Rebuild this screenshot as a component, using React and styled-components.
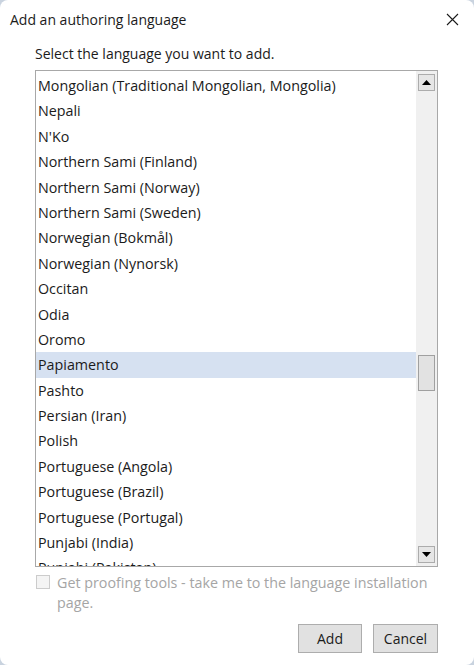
import React from 'react';
import styled, { createGlobalStyle } from 'styled-components';

const GlobalStyle = createGlobalStyle`
  html, body {
    margin: 0;
    padding: 0;
    background: #c9d3df;
  }
  body {
    font-family: 'Segoe UI', 'Open Sans', sans-serif;
  }
`;

const Dialog = styled.div`
  width: 474px;
  height: 665px;
  box-sizing: border-box;
  background: #ffffff;
  border-radius: 8px;
  display: flex;
  flex-direction: column;
  overflow: hidden;
`;

const TitleBar = styled.div`
  height: 38px;
  display: flex;
  align-items: center;
  justify-content: space-between;
  padding: 0 14px 0 10px;
`;

const Title = styled.span`
  font-size: 14px;
  color: #1b1b1b;
`;

const CloseButton = styled.button`
  border: none;
  background: none;
  padding: 0;
  width: 16px;
  height: 16px;
  display: flex;
  align-items: center;
  justify-content: center;
`;

const Body = styled.div`
  display: flex;
  flex-direction: column;
  padding: 0 36px 0 35px;
`;

const Prompt = styled.div`
  font-size: 14px;
  color: #1b1b1b;
  height: 32px;
  line-height: 32px;
`;

const ListBox = styled.div`
  height: 497px;
  box-sizing: border-box;
  border: 1px solid #a8a8a8;
  display: flex;
  background: #fff;
`;

const Items = styled.div`
  flex: 1;
  overflow: hidden;
  padding-top: 2px;
`;

const Item = styled.div`
  height: 25.4px;
  line-height: 25.4px;
  padding-left: 2px;
  font-size: 14.3px;
  color: #1b1b1b;
  white-space: nowrap;
  background: ${(p) => (p.$selected ? '#d6e1f1' : 'transparent')};
`;

const ScrollBar = styled.div`
  width: 21px;
  background: #f0f0f0;
  display: flex;
  flex-direction: column;
  align-items: center;
  padding: 3px 0;
  box-sizing: border-box;
`;

const Arrow = styled.div`
  width: 17px;
  height: 17px;
  box-sizing: border-box;
  border: 1px solid #acacac;
  background: #e6e6e6;
  display: flex;
  align-items: center;
  justify-content: center;
`;

const Track = styled.div`
  flex: 1;
  width: 100%;
  display: flex;
  flex-direction: column;
  align-items: center;
`;

const Thumb = styled.div`
  width: 17px;
  height: 36px;
  box-sizing: border-box;
  border: 1px solid #a0a0a0;
  background: #e2e2e2;
`;

const CheckRow = styled.label`
  display: flex;
  align-items: flex-start;
  gap: 7px;
  margin-top: 7px;
  padding-left: 1px;
`;

const CheckBox = styled.span`
  width: 14px;
  height: 14px;
  flex-shrink: 0;
  box-sizing: border-box;
  border: 1px solid #cccccc;
  background: #f4f4f4;
  margin-top: 1px;
`;

const CheckLabel = styled.span`
  font-size: 14.3px;
  line-height: 20px;
  color: #a5a5a5;
  margin-top: -1px;
`;

const ButtonRow = styled.div`
  display: flex;
  justify-content: flex-end;
  gap: 11px;
  margin-top: 11px;
`;

const Button = styled.button`
  width: ${(p) => p.$w}px;
  height: 29px;
  box-sizing: border-box;
  border: 1px solid #adadad;
  background: #e1e1e1;
  font-family: inherit;
  font-size: 14px;
  color: #1b1b1b;
  padding: 0;
`;

const languages = [
  'Mongolian (Traditional Mongolian, Mongolia)',
  'Nepali',
  "N'Ko",
  'Northern Sami (Finland)',
  'Northern Sami (Norway)',
  'Northern Sami (Sweden)',
  'Norwegian (Bokmål)',
  'Norwegian (Nynorsk)',
  'Occitan',
  'Odia',
  'Oromo',
  'Papiamento',
  'Pashto',
  'Persian (Iran)',
  'Polish',
  'Portuguese (Angola)',
  'Portuguese (Brazil)',
  'Portuguese (Portugal)',
  'Punjabi (India)',
  'Punjabi (Pakistan)',
];

const App = () => (
  <>
    <GlobalStyle />
    <Dialog>
      <TitleBar>
        <Title>Add an authoring language</Title>
        <CloseButton aria-label="Close">
          <svg width="13" height="13" viewBox="0 0 13 13">
            <path d="M1 1 L12 12 M12 1 L1 12" stroke="#1b1b1b" strokeWidth="1.1" />
          </svg>
        </CloseButton>
      </TitleBar>
      <Body>
        <Prompt>Select the language you want to add.</Prompt>
        <ListBox>
          <Items>
            {languages.map((l) => (
              <Item key={l} $selected={l === 'Papiamento'}>{l}</Item>
            ))}
          </Items>
          <ScrollBar>
            <Arrow>
              <svg width="9" height="5" viewBox="0 0 9 5"><path d="M0 5 L4.5 0 L9 5 Z" fill="#000" /></svg>
            </Arrow>
            <Track>
              <Thumb style={{ marginTop: 264 }} />
            </Track>
            <Arrow>
              <svg width="9" height="5" viewBox="0 0 9 5"><path d="M0 0 L4.5 5 L9 0 Z" fill="#000" /></svg>
            </Arrow>
          </ScrollBar>
        </ListBox>
        <CheckRow>
          <CheckBox />
          <CheckLabel>Get proofing tools - take me to the language installation page.</CheckLabel>
        </CheckRow>
        <ButtonRow>
          <Button $w={64}>Add</Button>
          <Button $w={65}>Cancel</Button>
        </ButtonRow>
      </Body>
    </Dialog>
  </>
);

export default App;
